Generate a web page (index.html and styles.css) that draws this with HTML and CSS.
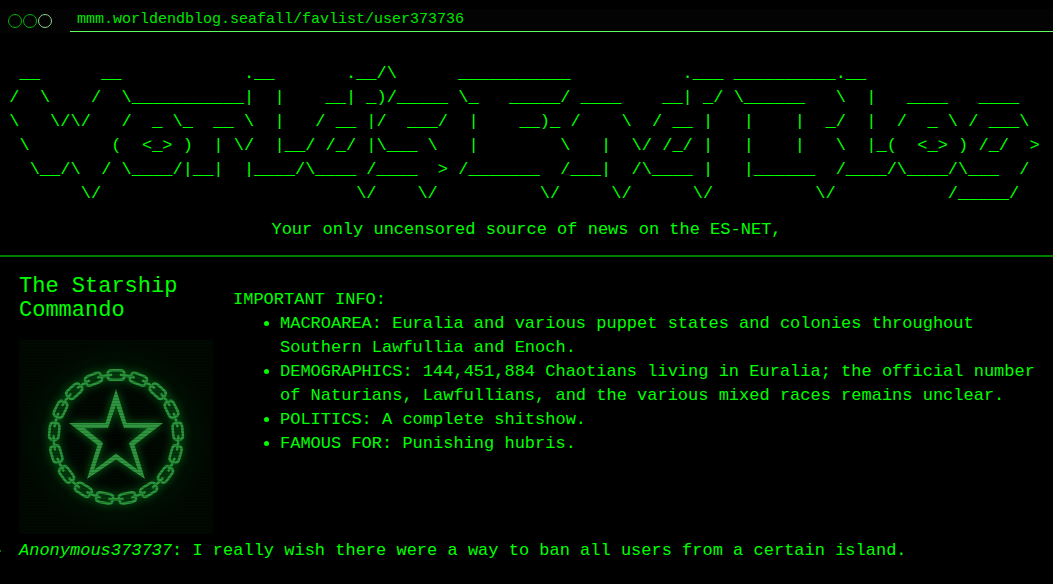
FILE: index.html
```html
<!DOCTYPE html>
<html lang="en">
<head>
<meta charset="utf-8">
<meta name="viewport" content="width=device-width, initial-scale=1">
<title>World's End Blog</title>
<link rel="stylesheet" href="styles.css">
</head>
<body>
<header>
  <div class="browser-bar">
    <div class="dots" aria-hidden="true">
      <span class="dot"></span><span class="dot"></span><span class="dot dot-pale"></span>
    </div>
    <input class="address" type="text" aria-label="Address" value="mmm.worldendblog.seafall/favlist/user373736">
  </div>
<pre class="banner" role="img" aria-label="World's End Blog"> __      __            .__       .__/\      ___________           .___ __________.__
/  \    /  \___________|  |    __| _)/_____ \_   _____/ ____    __| _/ \______   \  |   ____   ____
\   \/\/   /  _ \_  __ \  |   / __ |/  ___/  |    __)_ /    \  / __ |   |    |  _/  |  /  _ \ / ___\
 \        (  &lt;_&gt; )  | \/  |__/ /_/ |\___ \   |        \   |  \/ /_/ |   |    |   \  |_(  &lt;_&gt; ) /_/  &gt;
  \__/\  / \____/|__|  |____/\____ /____  &gt; /_______  /___|  /\____ |   |______  /____/\____/\___  /
       \/                         \/    \/          \/     \/      \/          \/           /_____/</pre>
  <p class="tagline">Your only uncensored source of news on the ES-NET,</p>
</header>
<main>
  <section class="profile">
    <div class="card">
      <h1>The Starship Commando</h1>
      <svg class="emblem" viewBox="0 0 194 194" role="img" aria-label="Star inside a ring of chain">
        <defs>
          <pattern id="scan" width="194" height="3" patternUnits="userSpaceOnUse">
            <rect width="194" height="1" fill="#001204" opacity=".2"/>
          </pattern>
          <radialGradient id="halo">
            <stop offset="0" stop-color="#000401"/>
            <stop offset=".55" stop-color="#000802"/>
            <stop offset=".68" stop-color="#011003"/>
            <stop offset="1" stop-color="#000701"/>
          </radialGradient>
          <g id="link">
            <path d="M-4 -4.8H4Q8 -4.8 8.3 -2M8.3 2Q8 4.8 4 4.8H-4Q-8 4.8 -8.3 2M-8.3 -2Q-8 -4.8 -4 -4.8" transform="translate(97 35)"/>
            <path d="M-6.5 0Q0 -.6 6.5 0" transform="rotate(10.59 97 97) translate(97 35)"/>
          </g>
        </defs>
        <rect width="194" height="194" fill="#000701"/>
        <circle cx="97" cy="97" r="97" fill="url(#halo)"/>
        <g class="glow">
          <g fill="none" stroke="#2a943c" stroke-width="2.6" stroke-linecap="round">
            <use href="#link"/>
            <use href="#link" transform="rotate(21.18 97 97)"/>
            <use href="#link" transform="rotate(42.35 97 97)"/>
            <use href="#link" transform="rotate(63.53 97 97)"/>
            <use href="#link" transform="rotate(84.71 97 97)"/>
            <use href="#link" transform="rotate(105.88 97 97)"/>
            <use href="#link" transform="rotate(127.06 97 97)"/>
            <use href="#link" transform="rotate(148.24 97 97)"/>
            <use href="#link" transform="rotate(169.41 97 97)"/>
            <use href="#link" transform="rotate(190.59 97 97)"/>
            <use href="#link" transform="rotate(211.76 97 97)"/>
            <use href="#link" transform="rotate(232.94 97 97)"/>
            <use href="#link" transform="rotate(254.12 97 97)"/>
            <use href="#link" transform="rotate(275.29 97 97)"/>
            <use href="#link" transform="rotate(296.47 97 97)"/>
            <use href="#link" transform="rotate(317.65 97 97)"/>
            <use href="#link" transform="rotate(338.82 97 97)"/>
          </g>
          <path fill="#2f963f" fill-rule="evenodd" d="M97 49L107.500 83H144L115.500 105L126 139L97 119.500L68 139L78.500 105L50 83H86.500ZM97 65L89 88H65.500L84 103L75 130L97 113.500L119 130L110 103L128.500 88H105Z"/>
        </g>
        <rect width="194" height="194" fill="url(#scan)"/>
      </svg>
    </div>
    <div class="info">
      <p>IMPORTANT INFO:</p>
      <ul>
        <li>MACROAREA: Euralia and various puppet states and colonies throughout Southern Lawfullia and Enoch.</li>
        <li>DEMOGRAPHICS: 144,451,884 Chaotians living in Euralia; the official number of Naturians, Lawfullians, and the various mixed races remains unclear.</li>
        <li>POLITICS: A complete shitshow.</li>
        <li>FAMOUS FOR: Punishing hubris.</li>
      </ul>
    </div>
  </section>
  <p class="comment"><span><em>Anonymous373737</em>: I really wish there were a way to ban all users from a certain island.</span></p>
</main>
</body>
</html>
```

FILE: styles.css
```css
* {
  box-sizing: border-box;
}

body {
  margin: 0;
  background: #000;
  color: #00ff00;
  font: 17px/24px "Liberation Mono", monospace;
}

p,
h1,
ul,
pre {
  margin: 0;
}

header {
  padding-top: 9px;
  border-bottom: 2px solid #008000;
}

.browser-bar {
  display: flex;
  gap: 18px;
  height: 24px;
  padding-left: 8px;
  background: #030303;
}

.dots {
  display: flex;
  align-items: center;
  gap: 1px;
}

.dot {
  width: 14px;
  height: 14px;
  border: 1px solid #00b400;
  border-radius: 50%;
}

.dot-pale {
  border-color: #8fd08f;
}

.address {
  flex: 1;
  min-width: 0;
  height: 23px;
  padding: 0 7px;
  border: 0;
  border-bottom: 1px solid #5fff5f;
  outline: 0;
  background: transparent;
  color: #00e600;
  font: inherit;
  font-size: 15px;
}

.banner {
  width: max-content;
  margin: 29px auto 12px;
  padding-right: 4px;
  font: inherit;
}

.tagline {
  padding-bottom: 13px;
  text-align: center;
}

.profile {
  display: flex;
  gap: 20px;
  padding: 18px 19px 0;
}

.card {
  flex: none;
  width: 194px;
}

h1 {
  margin-bottom: 17px;
  font-size: 22px;
  font-weight: normal;
  line-height: 24px;
}

.emblem {
  display: block;
  width: 100%;
}

.glow {
  filter: drop-shadow(0 0 4px #087a1c);
}

.info {
  flex: 1;
  padding-top: 13px;
}

ul {
  padding-left: 47px;
  margin-right: -10px;
}

.comment {
  display: flex;
  align-items: center;
  gap: 18px;
  margin-top: 5px;
}

.comment::before {
  content: "";
  width: 1px;
  height: 2px;
  background: #008000;
}
```
